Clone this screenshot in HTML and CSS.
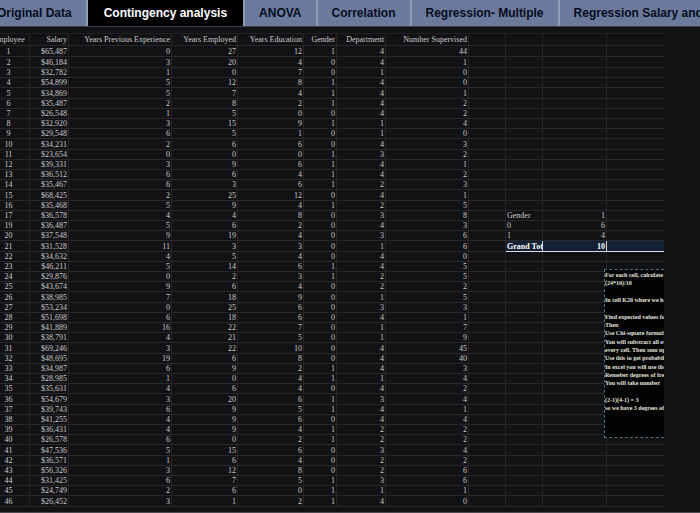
FILE: index.html
```html
<!DOCTYPE html>
<html lang="en">
<head>
    <meta charset="UTF-8">
    <meta name="viewport" content="width=device-width, initial-scale=1.0">
    <title>Contingency analysis</title>
    <link rel="stylesheet" href="styles.css">
</head>
<body>
    <nav class="tabs">
        <button class="tab">Original Data</button>
        <button class="tab active">Contingency analysis</button>
        <button class="tab">ANOVA</button>
        <button class="tab">Correlation</button>
        <button class="tab">Regression- Multiple</button>
        <button class="tab">Regression Salary and</button>
    </nav>

    <main class="sheet">
        <table class="grid">
            <colgroup>
                <col class="c-id"><col class="c-salary"><col class="c-prev"><col class="c-years"><col class="c-years">
                <col class="c-gender"><col class="c-dept"><col class="c-sup"><col class="c-small"><col class="c-small"><col class="c-count"><col class="c-last">
            </colgroup>
            <thead>
                <tr><th>Employee</th><th>Salary</th><th>Years Previous Experience</th><th>Years Employed</th><th>Years Education</th><th>Gender</th><th>Department</th><th>Number Supervised</th><th></th><th></th><th></th><th></th></tr>
            </thead>
            <tbody id="rows"></tbody>
        </table>

        <aside class="note">
            <div class="lines">
                <p>For each cell, calculate</p>
                <p>(24*10)/10</p>
            </div>
            <div class="lines">
                <p>In cell K20 where we have</p>
            </div>
            <div class="lines">
                <p>Find expected values for</p>
                <p>Then</p>
                <p>Use Chi-square formula</p>
                <p>You will substract all expected</p>
                <p>every cell. Then sum up</p>
                <p>Use this to get probability</p>
                <p>In excel you will use the</p>
                <p>Remeber degrees of freedom</p>
                <p>You will take number</p>
            </div>
            <div class="lines">
                <p>(2-1)(4-1) = 3</p>
                <p>so we have 3 degrees of</p>
            </div>
        </aside>
    </main>

    <script>
        // employee, salary, previous, employed, education, gender, department, supervised
        const data = [
            [1, "$65,487", 0, 27, 12, 1, 4, 44],
            [2, "$46,184", 3, 20, 4, 0, 4, 1],
            [3, "$32,782", 1, 0, 7, 0, 1, 0],
            [4, "$54,899", 5, 12, 8, 1, 4, 0],
            [5, "$34,869", 5, 7, 4, 1, 4, 1],
            [6, "$35,487", 2, 8, 2, 1, 4, 2],
            [7, "$26,548", 1, 5, 0, 0, 4, 2],
            [8, "$32,920", 3, 15, 9, 1, 1, 4],
            [9, "$29,548", 6, 5, 1, 0, 1, 0],
            [10, "$34,231", 2, 6, 6, 0, 4, 3],
            [11, "$23,654", 0, 0, 0, 1, 3, 2],
            [12, "$39,331", 3, 9, 6, 1, 4, 1],
            [13, "$36,512", 6, 6, 4, 1, 4, 2],
            [14, "$35,467", 6, 3, 6, 1, 2, 3],
            [15, "$68,425", 2, 25, 12, 0, 4, 1],
            [16, "$35,468", 5, 9, 4, 1, 2, 5],
            [17, "$36,578", 4, 4, 8, 0, 3, 8],
            [19, "$36,487", 5, 6, 2, 0, 4, 3],
            [20, "$37,548", 9, 19, 4, 0, 3, 6],
            [21, "$31,528", 11, 3, 3, 0, 1, 6],
            [22, "$34,632", 4, 5, 4, 0, 4, 0],
            [23, "$46,211", 5, 14, 6, 1, 4, 5],
            [24, "$29,876", 0, 2, 3, 1, 2, 5],
            [25, "$43,674", 9, 6, 4, 0, 2, 2],
            [26, "$38,985", 7, 18, 9, 0, 1, 5],
            [27, "$53,234", 0, 25, 6, 0, 3, 3],
            [28, "$51,698", 6, 18, 6, 0, 4, 1],
            [29, "$41,889", 16, 22, 7, 0, 1, 7],
            [30, "$38,791", 4, 21, 5, 0, 1, 9],
            [31, "$69,246", 3, 22, 10, 0, 4, 45],
            [32, "$48,695", 19, 6, 8, 0, 4, 40],
            [33, "$34,987", 6, 9, 2, 1, 4, 3],
            [34, "$28,985", 1, 0, 4, 1, 1, 4],
            [35, "$35,631", 4, 6, 4, 0, 4, 2],
            [36, "$54,679", 3, 20, 6, 1, 3, 4],
            [37, "$39,743", 6, 9, 5, 1, 4, 1],
            [38, "$41,255", 4, 9, 6, 0, 4, 4],
            [39, "$36,431", 4, 9, 4, 1, 2, 2],
            [40, "$26,578", 6, 0, 2, 1, 2, 2],
            [41, "$47,536", 5, 15, 6, 0, 3, 4],
            [42, "$36,571", 1, 6, 4, 0, 2, 2],
            [43, "$56,326", 3, 12, 8, 0, 2, 6],
            [44, "$31,425", 6, 7, 5, 1, 3, 6],
            [45, "$24,749", 2, 6, 0, 1, 1, 1],
            [46, "$26,452", 3, 1, 2, 1, 4, 0]
        ];

        // pivot summary, keyed by the row it sits on
        const pivot = {
            17: ["Gender", 1],
            19: [0, 6],
            20: [1, 4],
            21: ["Grand Total", 10]
        };

        const body = document.getElementById("rows");
        data.forEach(row => {
            const tr = body.insertRow();
            const side = pivot[row[0]] || ["", ""];
            [...row, "", ...side, ""].forEach(value => {
                tr.insertCell().textContent = value;
            });
            if (side[0] === "Grand Total") {
                tr.className = "total";
            }
        });
    </script>
</body>
</html>
```
FILE: styles.css
```css
* {
    box-sizing: border-box;
}

body {
    margin: 0;
    min-height: 100vh;
    display: flex;
    flex-direction: column;
    overflow: hidden;
    background: #121214;
    color: #cacacc;
    font-family: "Liberation Serif", "Times New Roman", serif;
    border-bottom: 1px solid #4c4c50;
}

/* sheet tabs */
.tabs {
    display: flex;
    gap: 2px;
    margin-left: -17px;
    background: #8f9ab5;
    border-bottom: 1px solid #3c414e;
}

.tab {
    flex: none;
    height: 26px;
    padding: 0 14px;
    border: none;
    background: #6b799c;
    color: #070c1c;
    font-family: "Liberation Sans", Arial, sans-serif;
    font-size: 12px;
    font-weight: bold;
    white-space: nowrap;
    cursor: pointer;
}

.tab:last-child {
    flex: 1 1 0;
    min-width: 0;
    padding-right: 0;
    overflow: hidden;
    text-align: left;
}

.tab.active {
    padding: 0 16px;
    background: #000;
    color: #fff;
}

/* spreadsheet */
.sheet {
    position: relative;
    padding-top: 6px;
}

.grid {
    width: 676px;
    margin-left: -12px;
    table-layout: fixed;
    border-collapse: separate;
    border-spacing: 0;
    border-top: 1px solid #222225;
    font-size: 8px;
    line-height: 9px;
}

.c-id { width: 42px; }
.c-salary { width: 39px; }
.c-prev { width: 103px; }
.c-years { width: 66px; }
.c-gender { width: 33px; }
.c-dept { width: 49px; }
.c-sup { width: 83px; }
.c-small { width: 37px; }
.c-count { width: 64px; }

.grid th,
.grid td {
    height: 10px;
    padding: 0 1px;
    border-right: 1px solid #252529;
    border-bottom: 1px solid #28282c;
    font-weight: normal;
    text-align: right;
    vertical-align: middle;
    white-space: nowrap;
    overflow: hidden;
}

.grid th {
    height: 12px;
}

.grid tr td:first-child,
.grid tr th:first-child {
    text-align: center;
}

.grid td:nth-child(10) {
    text-align: left;
}

.grid tr > :last-child {
    border-right: none;
}

/* taller rows */
.grid tbody tr:nth-child(5n) td,
.grid tbody tr:nth-child(-n+2) td {
    height: 11px;
}

.grid .total td:nth-child(n+10) {
    background: #142033;
    border-bottom-color: #d8dce4;
    color: #fff;
    font-weight: bold;
}

.grid .total td:nth-child(10),
.grid .total td:nth-child(11) {
    border-right-color: #d8dce4;
}

/* note lying over the cells */
.note {
    position: absolute;
    top: 242px;
    left: 604px;
    width: 60px;
    height: 169px;
    padding-top: 1px;
    overflow: hidden;
    background: #020302;
    border: 1px dashed #4f7280;
    border-right: none;
    color: #e4e4dc;
    font-size: 6px;
    font-weight: bold;
    line-height: 8px;
    white-space: nowrap;
}

.lines {
    margin-bottom: 9px;
}

.lines p {
    margin: 0;
}

.lines p:nth-child(3n) {
    margin-bottom: 1px;
}
```
